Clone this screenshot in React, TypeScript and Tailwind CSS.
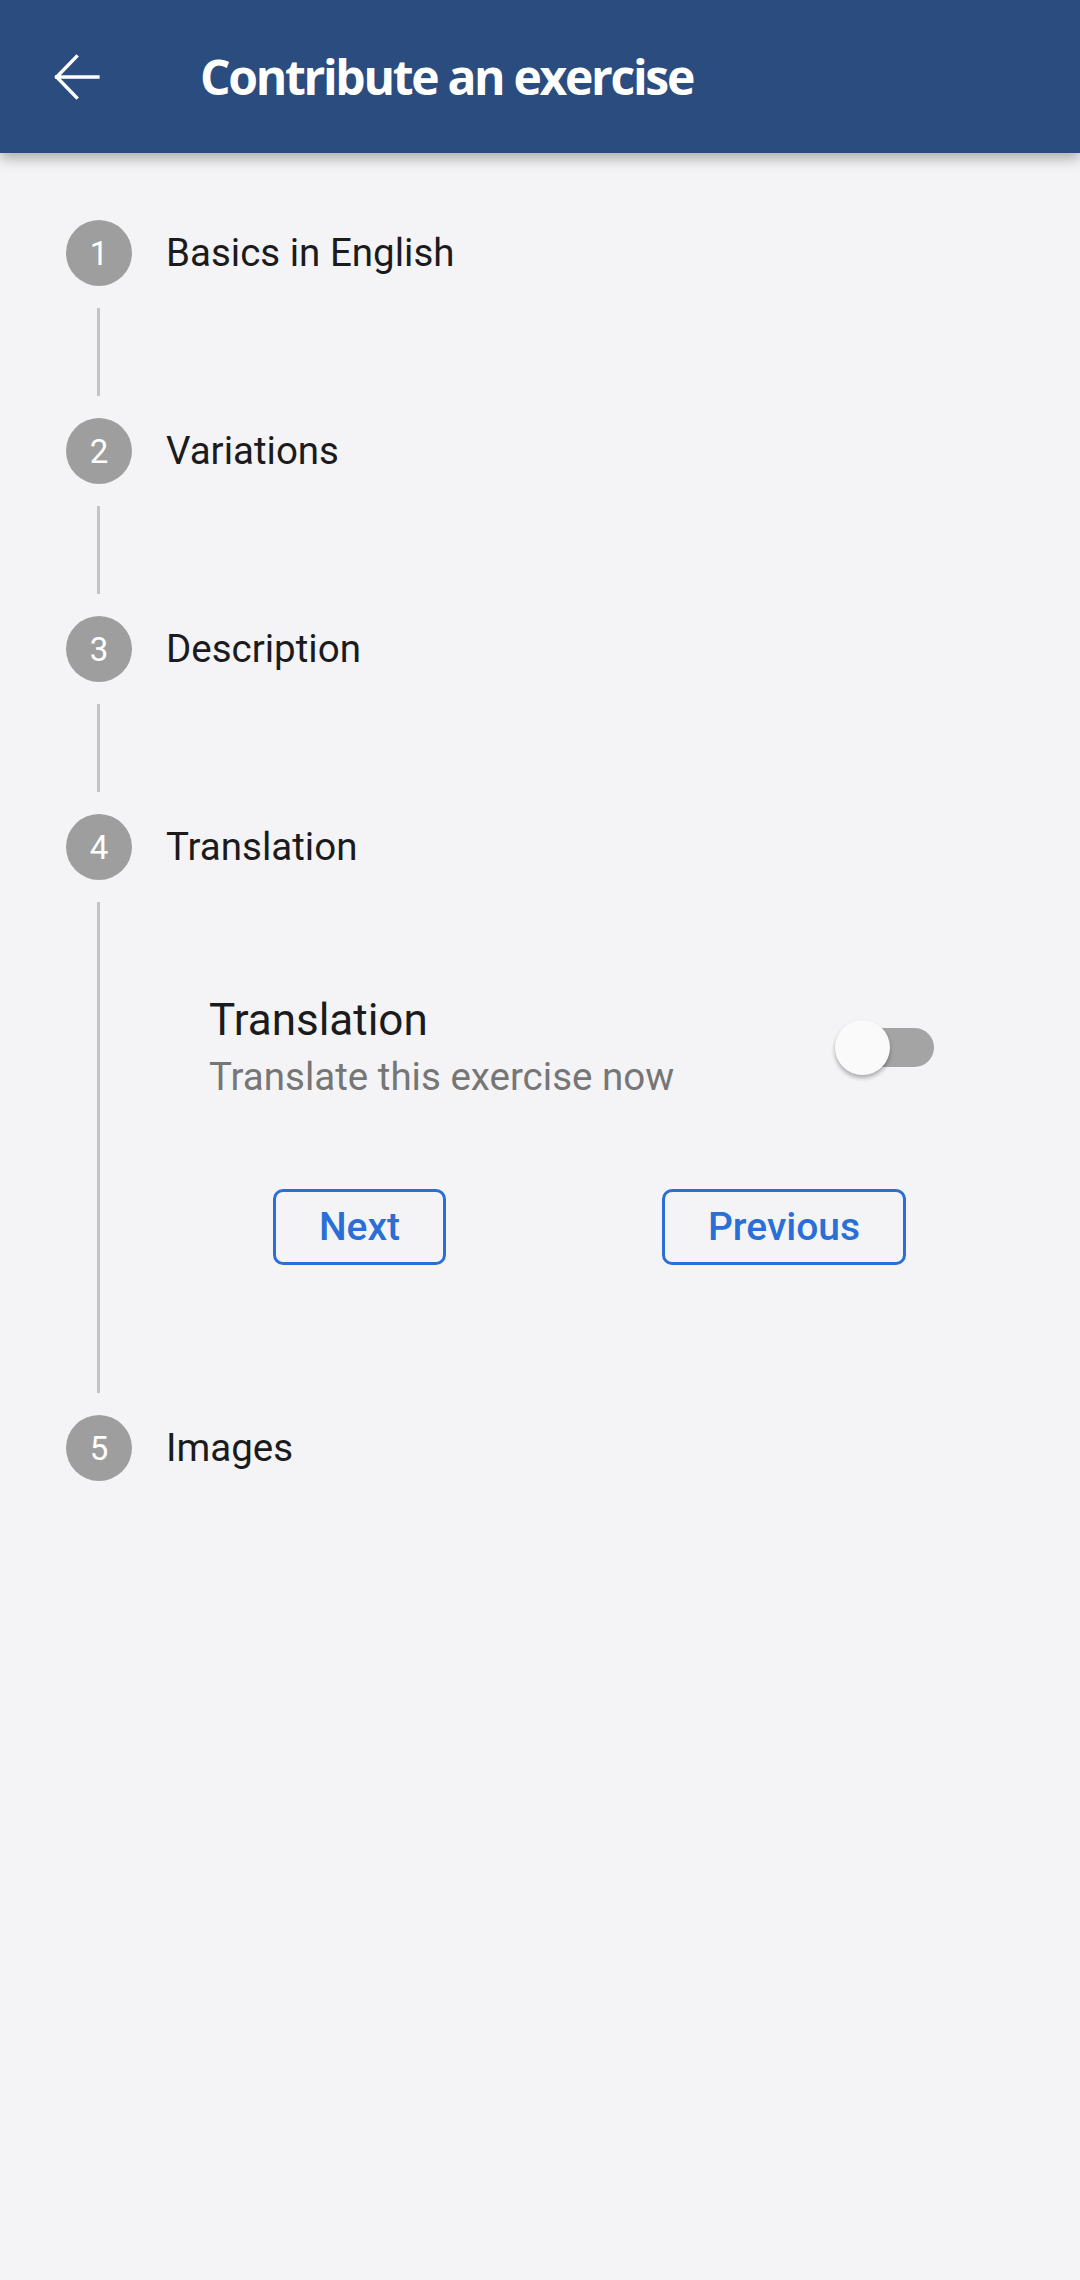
import React from "react";

function Step({ n, title }: { n: number; title: string }) {
  return (
    <div className="flex h-[66px] items-center pl-[66px]">
      <div className="flex h-[66px] w-[66px] items-center justify-center rounded-full bg-[#9e9e9e] text-[33px] leading-none text-white">
        {n}
      </div>
      <div className="ml-[34px] text-[38.5px] leading-none text-[#1b1b1d]">{title}</div>
    </div>
  );
}

function Connector() {
  return (
    <div className="py-[22px] pl-[97px]">
      <div className="h-[88px] w-[3px] bg-[#c4c4c4]" />
    </div>
  );
}

export default function App() {
  return (
    <div
      className="flex h-[2280px] w-[1080px] flex-col bg-[#f4f4f6]"
      style={{ fontFamily: "Roboto, 'Noto Sans', sans-serif" }}
    >
      <header className="relative z-10 flex h-[153px] shrink-0 items-center bg-[#2b4c7e] shadow-[0_6px_12px_rgba(0,0,0,0.28)]">
        <div className="ml-[44px] flex h-[66px] w-[66px] items-center justify-center">
          <svg width="66" height="66" viewBox="0 0 24 24" fill="none" stroke="white" strokeWidth="1.25" strokeLinecap="square">
            <path d="M4.6 12H19.6" />
            <path d="M11.8 4.6L4.6 12L11.8 19.4" />
          </svg>
        </div>
        <div
          className="ml-[90px] text-[48px] font-bold leading-none tracking-[-2.3px] text-white"
          style={{ fontFamily: "'Open Sans', sans-serif" }}
        >
          Contribute an exercise
        </div>
      </header>

      <main className="flex flex-col pt-[67px]">
        <Step n={1} title="Basics in English" />
        <Connector />
        <Step n={2} title="Variations" />
        <Connector />
        <Step n={3} title="Description" />
        <Connector />
        <Step n={4} title="Translation" />
        <div className="flex">
          <div className="flex w-[165px] shrink-0 py-[22px] pl-[97px]">
            <div className="w-[3px] bg-[#c4c4c4]" />
          </div>
          <div className="flex flex-1 flex-col pr-[66px] pt-[114px] pb-[150px]">
            <div className="flex items-center justify-between pl-[44px] pr-[80px]">
              <div className="flex flex-col gap-[8px]">
                <div className="text-[44px] leading-[52px] text-[#1b1b1d]">Translation</div>
                <div className="text-[38.5px] leading-[46px] text-[#767676]">Translate this exercise now</div>
              </div>
              <div className="relative h-[55px] w-[99px]">
                <div className="absolute left-[8px] top-[8px] h-[39px] w-[91px] rounded-full bg-[#a4a4a4]" />
                <div className="absolute left-0 top-0 h-[55px] w-[55px] rounded-full bg-[#fafafa] shadow-[0_3px_4px_rgba(0,0,0,0.3)]" />
              </div>
            </div>
            <div className="mt-[89px] flex justify-around">
              <button className="flex h-[76px] items-center rounded-[10px] border-[3px] border-[#2a6fd6] px-[43px] text-[39px] font-medium leading-none text-[#2a6fd6]">
                Next
              </button>
              <button className="flex h-[76px] items-center rounded-[10px] border-[3px] border-[#2a6fd6] px-[43px] text-[39px] font-medium leading-none text-[#2a6fd6]">
                Previous
              </button>
            </div>
          </div>
        </div>
        <Step n={5} title="Images" />
      </main>
    </div>
  );
}
